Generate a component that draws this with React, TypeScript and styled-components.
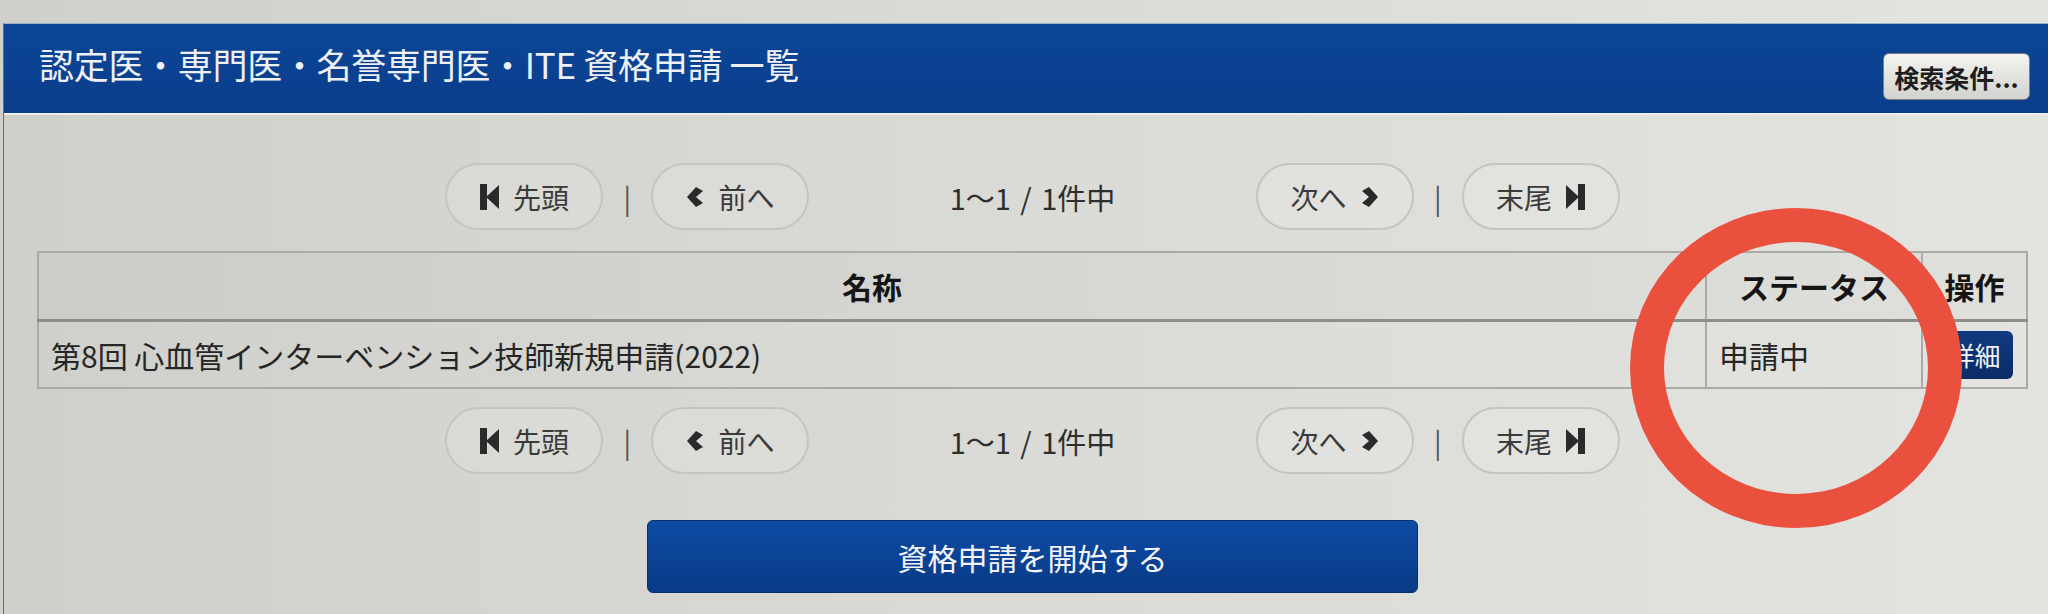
import { FC, ReactNode } from 'react';
import styled, { createGlobalStyle } from 'styled-components';

const GlobalStyle = createGlobalStyle`
  html, body {
    margin: 0;
    padding: 0;
  }
  body {
    width: 2048px;
    height: 614px;
    overflow: hidden;
    background: #d2d2ce;
    font-family: "Noto Sans CJK JP", "Noto Sans", sans-serif;
  }
`;

const Screen = styled.div`
  position: relative;
  width: 2048px;
  height: 614px;
  padding-top: 23px;
  box-sizing: border-box;
  overflow: hidden;
  background: linear-gradient(to right, #cfcfcb 0%, #d9d9d5 45%, #e3e3e0 100%);
`;

const Panel = styled.div`
  margin-left: 3px;
  width: 2059px;
  height: 591px;
  border-left: 1px solid #6e6e6a;
  box-sizing: border-box;
`;

const HeaderBar = styled.div`
  display: flex;
  justify-content: space-between;
  align-items: flex-start;
  height: 92px;
  padding: 0 32px 0 35px;
  box-sizing: border-box;
  background: linear-gradient(#0c4697, #0a3d8c);
  border-top: 1px solid #9fb0cc;
  border-bottom: 2px solid #efefed;
`;

const Title = styled.h1`
  margin: 20px 0 0;
  font-size: 35px;
  line-height: 40px;
  font-weight: 400;
  color: #eef0f6;
  letter-spacing: -0.3px;
`;

const SearchButton = styled.button`
  margin-top: 29px;
  width: 147px;
  height: 47px;
  border: 1px solid #7d7d7b;
  border-radius: 6px;
  background: linear-gradient(#f4f4f2, #d2d2ce);
  font-family: inherit;
  font-size: 25px;
  font-weight: 700;
  color: #1e1e1e;
  padding: 0;
`;

const Content = styled.div`
  display: flex;
  flex-direction: column;
  align-items: center;
  padding: 48px 34px 0 33px;
`;

const Pager = styled.div`
  display: flex;
  align-items: center;
  height: 67px;
  margin-bottom: ${(p: { gapBelow: number }) => p.gapBelow}px;
`;

const PageButton = styled.button`
  display: inline-flex;
  align-items: center;
  justify-content: center;
  gap: 13px;
  width: 158px;
  height: 67px;
  padding: 0;
  border: 2px solid #c4c4c1;
  border-radius: 34px;
  background: rgba(255, 255, 255, 0.12);
  font-family: inherit;
  font-size: 28px;
  color: #3a3a3a;
`;

const Icon = styled.svg`
  display: block;
  fill: #2a2a2a;
  stroke: #2a2a2a;
`;

const Separator = styled.span`
  margin: 0 20px;
  font-size: 28px;
  color: #555;
`;

const Counter = styled.span`
  width: 447px;
  text-align: center;
  font-size: 29px;
  word-spacing: 3px;
  color: #2e2e2e;
`;

const Table = styled.table`
  width: 100%;
  table-layout: fixed;
  border-collapse: collapse;
  margin-bottom: 18px;
`;

const Th = styled.th`
  height: 66px;
  padding: 0 8px;
  border: 2px solid #aaaaa7;
  border-bottom: 3px solid #8e8e8b;
  font-size: 30px;
  font-weight: 700;
  color: #151515;
  text-align: center;
  background: rgba(0, 0, 0, 0.015);
`;

const Td = styled.td`
  height: 65px;
  padding: 0 12px;
  border: 2px solid #aaaaa7;
  font-size: 30px;
  color: #262626;
  text-align: ${(p: { center?: boolean }) => (p.center ? 'center' : 'left')};
`;

const DetailButton = styled.button`
  width: 76px;
  height: 48px;
  padding: 0;
  border: none;
  border-radius: 6px;
  background: linear-gradient(#103a80, #0a2c66);
  font-family: inherit;
  font-size: 26px;
  color: #f2f2f2;
`;

const StartButton = styled.button`
  margin-top: 27px;
  width: 771px;
  height: 73px;
  border: 1px solid #072f6c;
  border-radius: 6px;
  background: linear-gradient(#0e4ba4, #083a86);
  font-family: inherit;
  font-size: 30px;
  color: #f4f4f8;
`;

const Marker = styled.div`
  position: absolute;
  left: 1630px;
  top: 208px;
  width: 332px;
  height: 320px;
  box-sizing: border-box;
  border: 34px solid #ea503e;
  border-radius: 50%;
  pointer-events: none;
`;

const StepIcon: FC<{ flip?: boolean }> = ({ flip }) => (
  <Icon
    width="20"
    height="28"
    viewBox="0 0 20 28"
    style={flip ? { transform: 'scaleX(-1)' } : undefined}
  >
    <rect x="0" y="1" width="7" height="26" stroke="none" />
    <polygon points="6,14 19,2 19,26" stroke="none" />
  </Icon>
);

const ChevronIcon: FC<{ flip?: boolean }> = ({ flip }) => (
  <Icon
    width="20"
    height="24"
    viewBox="0 0 20 24"
    style={flip ? { transform: 'scaleX(-1)' } : undefined}
  >
    <polygon points="11,2 18,6 11,12 18,18 11,22 2,12" stroke="none" />
  </Icon>
);

type PagerProps = { gapBelow: number };

const PagerRow: FC<PagerProps> = ({ gapBelow }) => (
  <Pager gapBelow={gapBelow}>
    <PageButton>
      <StepIcon />
      先頭
    </PageButton>
    <Separator>|</Separator>
    <PageButton>
      <ChevronIcon />
      前へ
    </PageButton>
    <Counter>1〜1 / 1件中</Counter>
    <PageButton>
      次へ
      <ChevronIcon flip />
    </PageButton>
    <Separator>|</Separator>
    <PageButton>
      末尾
      <StepIcon flip />
    </PageButton>
  </Pager>
);

type Application = { name: string; status: string; action: ReactNode };

const rows: Application[] = [
  {
    name: '第8回 心血管インターベンション技師新規申請(2022)',
    status: '申請中',
    action: <DetailButton>詳細</DetailButton>,
  },
];

const App: FC = () => (
  <Screen>
    <GlobalStyle />
    <Panel>
      <HeaderBar>
        <Title>認定医・専門医・名誉専門医・ITE 資格申請 一覧</Title>
        <SearchButton>検索条件...</SearchButton>
      </HeaderBar>
      <Content>
        <PagerRow gapBelow={21} />
        <Table>
          <colgroup>
            <col />
            <col style={{ width: 216 }} />
            <col style={{ width: 105 }} />
          </colgroup>
          <thead>
            <tr>
              <Th>名称</Th>
              <Th>ステータス</Th>
              <Th>操作</Th>
            </tr>
          </thead>
          <tbody>
            {rows.map(row => (
              <tr key={row.name}>
                <Td>{row.name}</Td>
                <Td>{row.status}</Td>
                <Td center>{row.action}</Td>
              </tr>
            ))}
          </tbody>
        </Table>
        <PagerRow gapBelow={19} />
        <StartButton>資格申請を開始する</StartButton>
      </Content>
    </Panel>
    <Marker />
  </Screen>
);

export default App;
